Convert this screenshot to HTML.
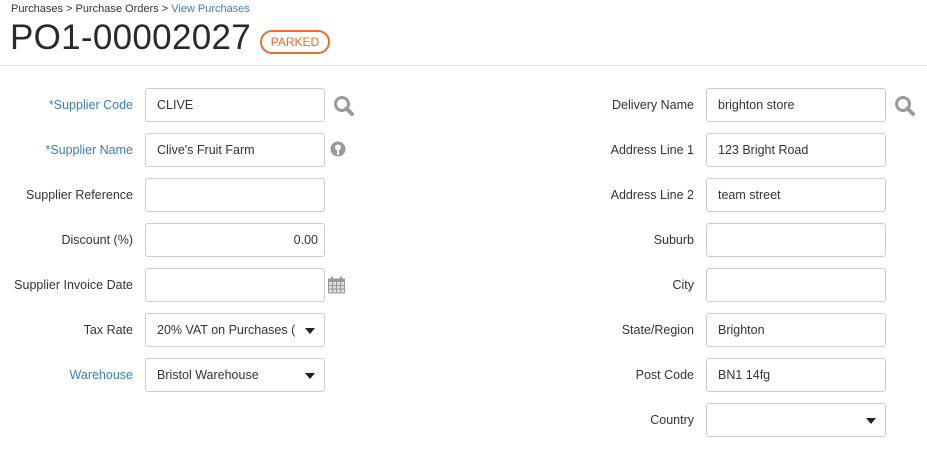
<!DOCTYPE html>
<html><head><style>
body{margin:0;width:927px;height:456px;background:#fff;font-family:"Liberation Sans",sans-serif;color:#333;position:relative;overflow:hidden}
.bc{position:absolute;left:11px;top:3px;font-size:11px;color:#333}
.bc span{color:#3d7fb0}
h1{position:absolute;left:10px;top:18px;margin:0;font-weight:normal;font-size:35px;color:#2a2a2a;letter-spacing:0.3px}
.badge{position:absolute;left:260px;top:30px;width:66px;height:20px;border:2px solid #ef6b2b;border-radius:12px;color:#ef6b2b;font-size:12px;text-align:center;line-height:20px;box-sizing:content-box}
.hr{position:absolute;left:0;right:0;top:65px;border-top:1px solid #e2e2e2}
.l{position:absolute;font-size:12.5px;text-align:right;width:200px;line-height:33px}
.b{color:#3a7db3}
.i{position:absolute;border:1px solid #ccc;border-radius:3px;font-size:12.5px;line-height:32px;padding:0 11px;box-sizing:border-box;width:180px;height:34px;color:#333;white-space:nowrap;overflow:hidden}
.car{position:absolute;right:9px;top:14px;width:0;height:0;border-left:5px solid transparent;border-right:5px solid transparent;border-top:6px solid #222}
</style></head><body>
<div class="bc">Purchases &gt; Purchase Orders &gt; <span>View Purchases</span></div>
<h1>PO1-00002027</h1>
<div class="badge">PARKED</div>
<div class="hr"></div>

<div class="l b" style="left:-67px;top:89px">*Supplier Code</div>
<div class="l b" style="left:-67px;top:134px">*Supplier Name</div>
<div class="l" style="left:-67px;top:179px">Supplier Reference</div>
<div class="l" style="left:-67px;top:224px">Discount (%)</div>
<div class="l" style="left:-67px;top:269px">Supplier Invoice Date</div>
<div class="l" style="left:-67px;top:314px">Tax Rate</div>
<div class="l b" style="left:-67px;top:359px">Warehouse</div>

<div class="i" style="left:145px;top:88px">CLIVE</div>
<div class="i" style="left:145px;top:133px">Clive's Fruit Farm</div>
<div class="i" style="left:145px;top:178px"></div>
<div class="i" style="left:145px;top:223px;text-align:right;padding-right:6px">0.00</div>
<div class="i" style="left:145px;top:268px"></div>
<div class="i" style="left:145px;top:313px">20% VAT on Purchases (<div class="car"></div></div>
<div class="i" style="left:145px;top:358px">Bristol Warehouse<div class="car"></div></div>

<svg style="position:absolute;left:333px;top:95px" width="22" height="22" viewBox="0 0 22 22"><circle cx="9" cy="9" r="6.5" fill="none" stroke="#999" stroke-width="3"/><line x1="13.5" y1="13.5" x2="19" y2="19" stroke="#999" stroke-width="4" stroke-linecap="round"/></svg>
<svg style="position:absolute;left:330px;top:141px" width="16" height="18" viewBox="0 0 16 18"><circle cx="8" cy="8" r="7.5" fill="#999"/><circle cx="8" cy="6.5" r="3" fill="#fff"/><rect x="7" y="9" width="2" height="5" fill="#fff"/></svg>
<svg style="position:absolute;left:328px;top:276px" width="17" height="18" viewBox="0 0 17 18"><rect x="0.5" y="3" width="16" height="14" fill="#ddd" stroke="#999"/><rect x="0.5" y="3" width="16" height="3" fill="#999"/><rect x="3" y="0.5" width="2" height="4" fill="#999"/><rect x="12" y="0.5" width="2" height="4" fill="#999"/><path d="M4.5 6v11M8.5 6v11M12.5 6v11M1 9.5h15M1 13h15" stroke="#999" stroke-width="1"/></svg>

<div class="l" style="left:494px;top:89px">Delivery Name</div>
<div class="l" style="left:494px;top:134px">Address Line 1</div>
<div class="l" style="left:494px;top:179px">Address Line 2</div>
<div class="l" style="left:494px;top:224px">Suburb</div>
<div class="l" style="left:494px;top:269px">City</div>
<div class="l" style="left:494px;top:314px">State/Region</div>
<div class="l" style="left:494px;top:359px">Post Code</div>
<div class="l" style="left:494px;top:404px">Country</div>

<div class="i" style="left:706px;top:88px">brighton store</div>
<div class="i" style="left:706px;top:133px">123 Bright Road</div>
<div class="i" style="left:706px;top:178px">team street</div>
<div class="i" style="left:706px;top:223px"></div>
<div class="i" style="left:706px;top:268px"></div>
<div class="i" style="left:706px;top:313px">Brighton</div>
<div class="i" style="left:706px;top:358px">BN1 14fg</div>
<div class="i" style="left:706px;top:403px"><div class="car"></div></div>
<svg style="position:absolute;left:894px;top:95px" width="22" height="22" viewBox="0 0 22 22"><circle cx="9" cy="9" r="6.5" fill="none" stroke="#999" stroke-width="3"/><line x1="13.5" y1="13.5" x2="19" y2="19" stroke="#999" stroke-width="4" stroke-linecap="round"/></svg>
</body></html>
